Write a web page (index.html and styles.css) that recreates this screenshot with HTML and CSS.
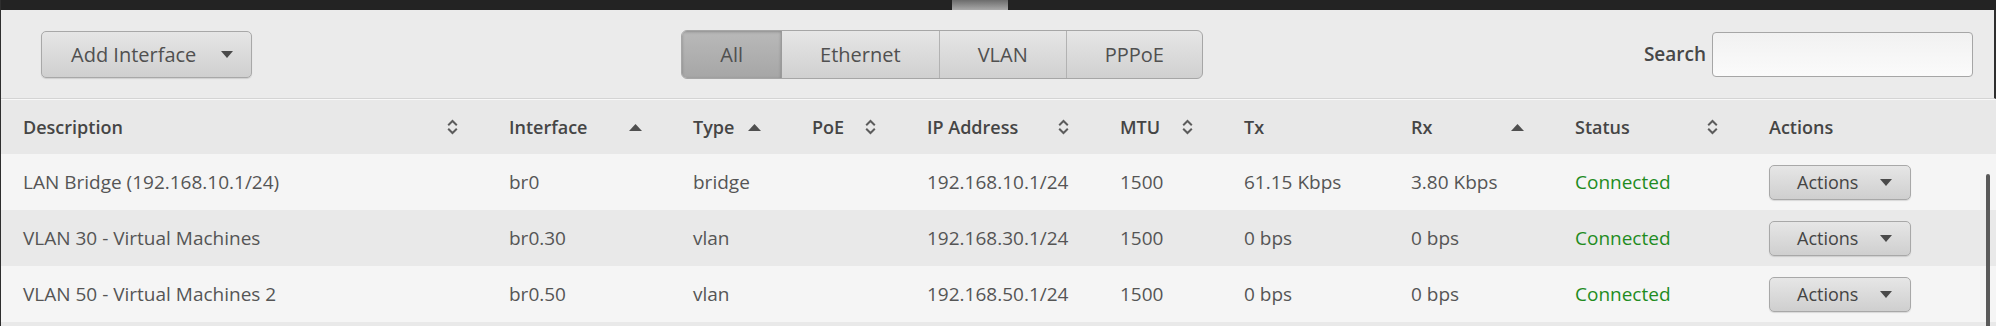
FILE: index.html
```html
<!DOCTYPE html>
<html>
<head>
<meta charset="utf-8">
<link rel="stylesheet" href="styles.css">
</head>
<body>
<div class="app">
  <div class="topbar"><span class="handle"></span></div>
  <div class="toolbar">
    <button class="btn btn-add"><span>Add Interface</span><svg class="caret" width="12" height="7" viewBox="0 0 12 7"><polygon points="0,0 12,0 6,7"/></svg></button>
    <div class="seg">
      <span class="seg-item active">All</span>
      <span class="seg-item">Ethernet</span>
      <span class="seg-item">VLAN</span>
      <span class="seg-item">PPPoE</span>
    </div>
    <div class="search">
      <label class="search-label">Search</label>
      <input class="search-input" type="text">
    </div>
  </div>
  <div class="table">
    <div class="row head">
      <div class="th">Description<svg class="ico-both" width="11" height="16" viewBox="0 0 11 16"><path d="M1.2 6.2 L5.5 2 L9.8 6.2 M1.2 9.8 L5.5 14 L9.8 9.8"/></svg></div>
      <div class="th">Interface<svg class="ico-asc" width="13" height="7" viewBox="0 0 13 7"><polygon points="0,7 6.5,0 13,7"/></svg></div>
      <div class="th">Type<svg class="ico-asc" width="13" height="7" viewBox="0 0 13 7"><polygon points="0,7 6.5,0 13,7"/></svg></div>
      <div class="th">PoE<svg class="ico-both" width="11" height="16" viewBox="0 0 11 16"><path d="M1.2 6.2 L5.5 2 L9.8 6.2 M1.2 9.8 L5.5 14 L9.8 9.8"/></svg></div>
      <div class="th">IP Address<svg class="ico-both" width="11" height="16" viewBox="0 0 11 16"><path d="M1.2 6.2 L5.5 2 L9.8 6.2 M1.2 9.8 L5.5 14 L9.8 9.8"/></svg></div>
      <div class="th">MTU<svg class="ico-both" width="11" height="16" viewBox="0 0 11 16"><path d="M1.2 6.2 L5.5 2 L9.8 6.2 M1.2 9.8 L5.5 14 L9.8 9.8"/></svg></div>
      <div class="th">Tx</div>
      <div class="th">Rx<svg class="ico-asc" width="13" height="7" viewBox="0 0 13 7"><polygon points="0,7 6.5,0 13,7"/></svg></div>
      <div class="th">Status<svg class="ico-both" width="11" height="16" viewBox="0 0 11 16"><path d="M1.2 6.2 L5.5 2 L9.8 6.2 M1.2 9.8 L5.5 14 L9.8 9.8"/></svg></div>
      <div class="th">Actions</div>
    </div>
    <div class="row odd">
      <div>LAN Bridge (192.168.10.1/24)</div>
      <div>br0</div>
      <div>bridge</div>
      <div></div>
      <div>192.168.10.1/24</div>
      <div>1500</div>
      <div>61.15 Kbps</div>
      <div>3.80 Kbps</div>
      <div class="ok">Connected</div>
      <div><button class="btn btn-act"><span>Actions</span><svg class="caret" width="12" height="7" viewBox="0 0 12 7"><polygon points="0,0 12,0 6,7"/></svg></button></div>
    </div>
    <div class="row even">
      <div>VLAN 30 - Virtual Machines</div>
      <div>br0.30</div>
      <div>vlan</div>
      <div></div>
      <div>192.168.30.1/24</div>
      <div>1500</div>
      <div>0 bps</div>
      <div>0 bps</div>
      <div class="ok">Connected</div>
      <div><button class="btn btn-act"><span>Actions</span><svg class="caret" width="12" height="7" viewBox="0 0 12 7"><polygon points="0,0 12,0 6,7"/></svg></button></div>
    </div>
    <div class="row odd">
      <div>VLAN 50 - Virtual Machines 2</div>
      <div>br0.50</div>
      <div>vlan</div>
      <div></div>
      <div>192.168.50.1/24</div>
      <div>1500</div>
      <div>0 bps</div>
      <div>0 bps</div>
      <div class="ok">Connected</div>
      <div><button class="btn btn-act"><span>Actions</span><svg class="caret" width="12" height="7" viewBox="0 0 12 7"><polygon points="0,0 12,0 6,7"/></svg></button></div>
    </div>
    <div class="scrollbar"></div>
  </div>
</div>
</body>
</html>
```
FILE: styles.css
```css
* { box-sizing: border-box; }
html, body {
  margin: 0;
  padding: 0;
}
body {
  width: 1996px;
  height: 326px;
  overflow: hidden;
  background: #e9e9e9;
  font-family: "Open Sans", "DejaVu Sans", sans-serif;
  color: #555;
}
.app {
  height: 326px;
  border-left: 1px solid #2e2e2e;
  position: relative;
}
.topbar {
  height: 10px;
  background: #232323;
  display: flex;
}
.handle {
  margin-left: 951px;
  width: 56px;
  height: 10px;
  background: linear-gradient(#6c6c6c, #a9a9a9);
}
.toolbar {
  height: 89px;
  display: flex;
  align-items: center;
  padding: 0 21px 0 40px;
  background: #ebebeb;
  border-bottom: 1px solid #d4d4d4;
  border-right: 2px solid #2e2e2e;
}
.btn {
  display: flex;
  align-items: center;
  border: 1px solid #a8a8a8;
  border-radius: 5px;
  background: linear-gradient(#e6e6e6, #cfcfcf);
  box-shadow: 0 1px 1px rgba(0,0,0,0.12);
  font-family: "Open Sans", "DejaVu Sans", sans-serif;
  color: #505050;
  cursor: pointer;
}
.caret { fill: #4a4a4a; display: block; }
.btn-add {
  height: 47px;
  padding: 0 18px 0 29px;
  gap: 25px;
  font-size: 20px;
}
.seg {
  margin-left: 429px;
  height: 49px;
  display: flex;
  border: 1px solid #a6a6a6;
  border-radius: 6px;
  overflow: hidden;
  background: linear-gradient(#e6e6e6, #d0d0d0);
}
.seg-item {
  display: flex;
  align-items: center;
  padding: 0 38px;
  font-size: 20px;
  color: #505050;
  border-right: 1px solid #b2b2b2;
}
.seg-item:last-child { border-right: 0; }
.seg-item.active {
  background: linear-gradient(#b9b9b9, #a6a6a6);
  box-shadow: inset 0 1px 3px rgba(0,0,0,0.25);
  border-right-color: #9a9a9a;
}
.search {
  margin-left: auto;
  display: flex;
  align-items: center;
  gap: 6px;
}
.search-label {
  font-size: 19px;
  font-weight: 600;
  color: #474747;
}
.search-input {
  width: 261px;
  height: 45px;
  border: 1px solid #a6a6a6;
  border-radius: 4px;
  background: linear-gradient(#f1f1f1, #fbfbfb);
  outline: none;
}
.table {
  position: relative;
  height: 227px;
}
.row {
  display: grid;
  grid-template-columns: 486px 184px 119px 115px 193px 124px 167px 164px 194px 1fr;
  align-items: center;
  padding-left: 22px;
  height: 56px;
  font-size: 19px;
  color: #555;
  white-space: nowrap;
}
.row.head {
  height: 55px;
  background: #e8e8e8;
  border-top: 1px solid #f8f8f8;
  font-size: 18px;
  font-weight: 600;
  color: #454545;
}
.row.odd { background: #f5f5f5; }
.row.even { background: #e9e9e9; }
.th {
  display: flex;
  align-items: center;
  justify-content: space-between;
  padding-right: 51px;
}
.ico-both {
  fill: none;
  stroke: #5c5c5c;
  stroke-width: 2;
}
.ico-asc { fill: #4f4f4f; }
.ok { color: #1f8c1f; }
.btn-act {
  height: 35px;
  padding: 0 18px 0 27px;
  gap: 22px;
  font-size: 18px;
  color: #444;
}
.scrollbar {
  position: absolute;
  right: 6px;
  top: 75px;
  bottom: 0;
  width: 4px;
  background: #5a5a5a;
  border-radius: 2px 2px 0 0;
}
```
